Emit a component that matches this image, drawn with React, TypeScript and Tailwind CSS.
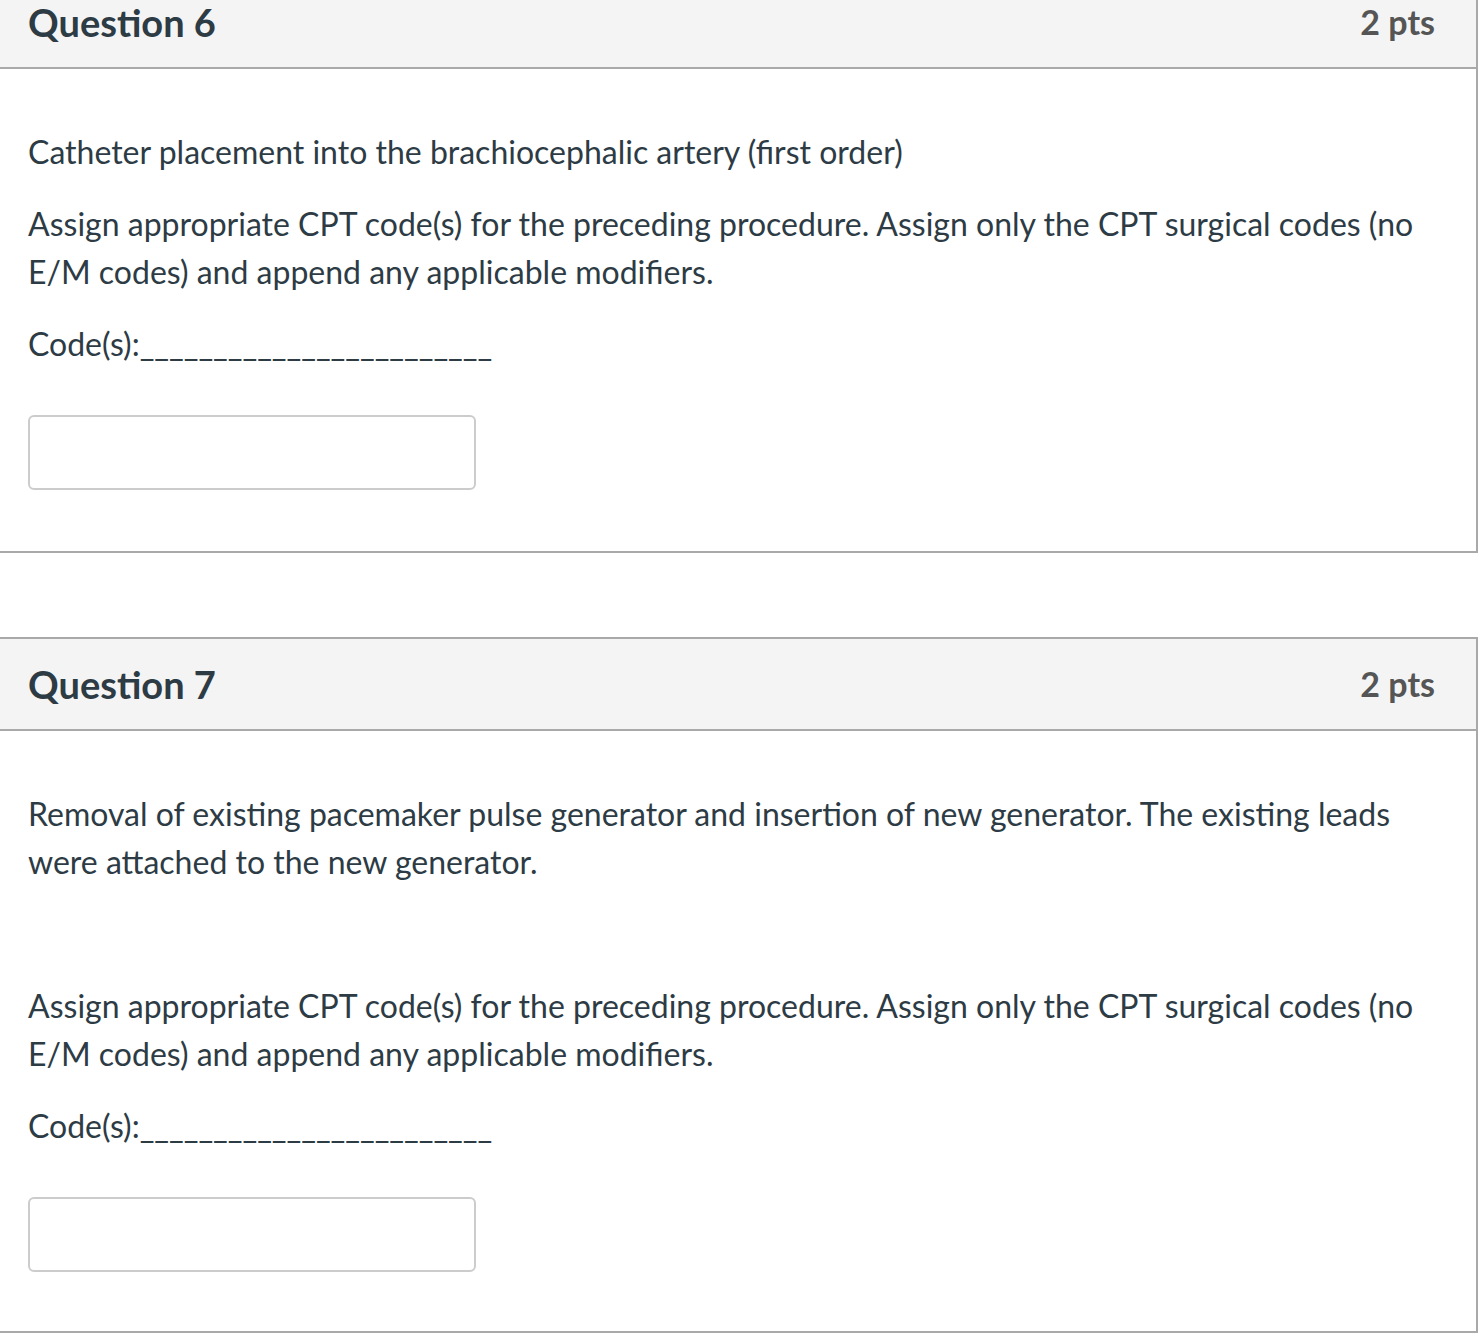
const questions = [
  {
    title: "Question 6",
    points: "2 pts",
    bodyPad: "pb-[61px]",
    paragraphs: [
      "Catheter placement into the brachiocephalic artery (first order)",
      "Assign appropriate CPT code(s) for the preceding procedure. Assign only the CPT surgical codes (no E/M codes) and append any applicable modifiers.",
      "Code(s):________________________",
    ],
  },
  {
    title: "Question 7",
    points: "2 pts",
    bodyPad: "pb-[59px]",
    paragraphs: [
      "Removal of existing pacemaker pulse generator and insertion of new generator. The existing leads were attached to the new generator.",
      "\u00a0",
      "Assign appropriate CPT code(s) for the preceding procedure. Assign only the CPT surgical codes (no E/M codes) and append any applicable modifiers.",
      "Code(s):________________________",
    ],
  },
];

function QuestionCard({
  title,
  points,
  bodyPad,
  paragraphs,
}: {
  title: string;
  points: string;
  bodyPad: string;
  paragraphs: string[];
}) {
  return (
    <div className="w-[1480px] -ml-[2px] border-2 border-[#a9a9a9] bg-white">
      {/* Header */}
      <div className="h-[92px] flex items-center justify-between pl-[28px] pr-[41px] bg-[#f4f4f4] border-b-2 border-[#a9a9a9]">
        <h2 className="text-[38px] font-bold text-[#2d3b45] leading-none">{title}</h2>
        <span className="text-[34px] font-bold text-[#555555] leading-none">{points}</span>
      </div>

      {/* Body */}
      <div className={`pl-[28px] pr-[28px] pt-[59px] ${bodyPad} text-[32px] leading-[48px] text-[#2d3b45]`}>
        <div className="flex flex-col gap-[24px]">
          {paragraphs.map((p, i) => (
            <p key={i}>{p}</p>
          ))}
        </div>
        <input
          type="text"
          className="block mt-[47px] w-[448px] h-[75px] border-2 border-[#cccccc] rounded-[6px] bg-white"
        />
      </div>
    </div>
  );
}

export default function App() {
  return (
    <div className="min-h-[1338px] bg-white font-['Lato',sans-serif] overflow-hidden">
      <div className="-mt-[25px] flex flex-col gap-[84px]">
        {questions.map((q) => (
          <QuestionCard key={q.title} {...q} />
        ))}
      </div>
    </div>
  );
}
